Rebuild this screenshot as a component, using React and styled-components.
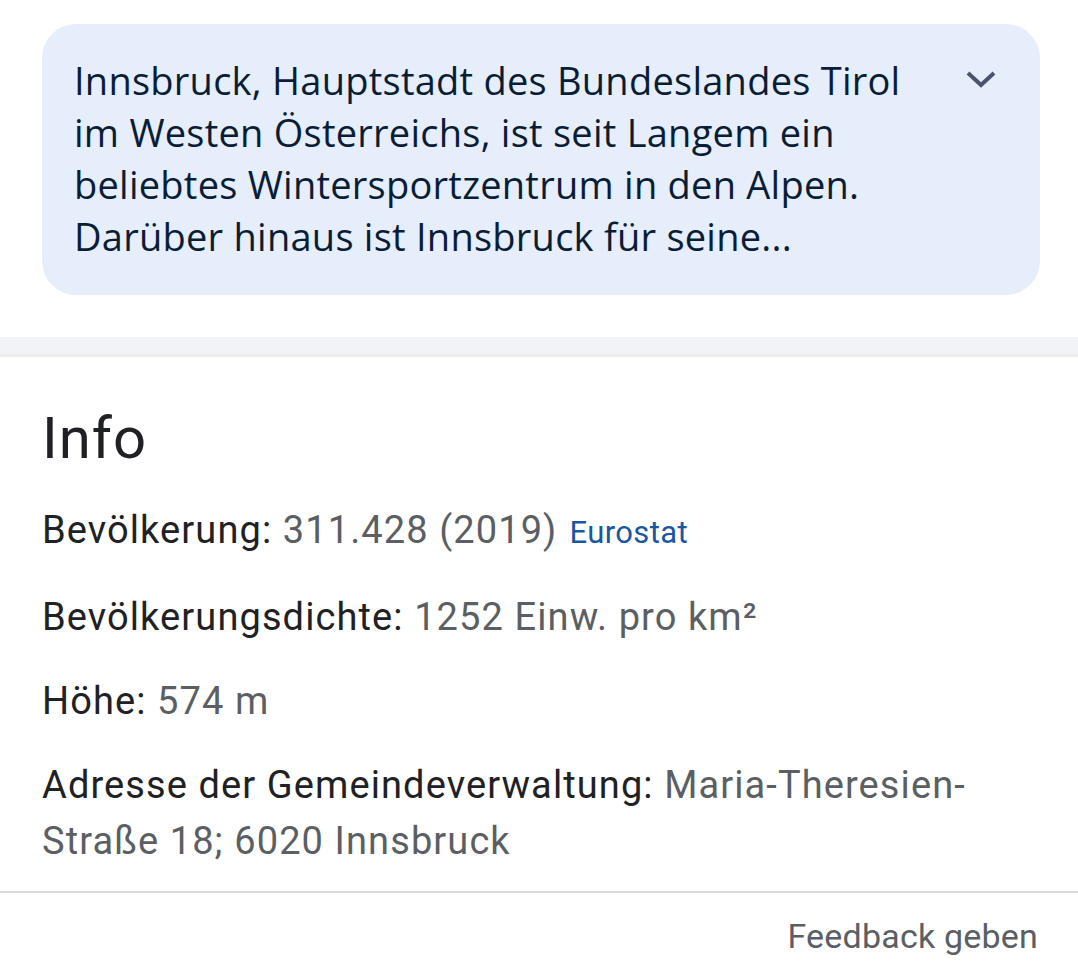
import React from "react";
import styled, { createGlobalStyle } from "styled-components";

const Global = createGlobalStyle`
  html, body { margin: 0; padding: 0; background: #ffffff; }
  body { font-family: Roboto, "Liberation Sans", sans-serif; -webkit-font-smoothing: antialiased; }
`;

const Page = styled.div`
  width: 1078px;
  display: flex;
  flex-direction: column;
`;

const SummaryWrap = styled.section`
  padding: 24px 38px 42px 42px;
`;

const SummaryCard = styled.div`
  background: #e6edfb;
  border-radius: 34px;
  padding: 30px 42px 33px 32px;
  display: flex;
  align-items: flex-start;
  gap: 40px;
`;

const SummaryText = styled.p`
  margin: 0;
  flex: 1;
  font-family: "Open Sans", Inter, sans-serif;
  font-size: 38px;
  line-height: 52px;
  color: #0a1d36;
  letter-spacing: 0.25px;
`;

const ChevronButton = styled.button`
  border: 0;
  background: transparent;
  padding: 0;
  margin-top: 12px;
  width: 34px;
  height: 26px;
  display: flex;
  align-items: center;
  justify-content: center;
  color: #4a5270;
`;

const SectionGap = styled.div`
  height: 17px;
  background: #f1f3f7;
  border-bottom: 3px solid #ececec;
`;

const InfoSection = styled.section`
  padding: 51px 42px 22px 42px;
  display: flex;
  flex-direction: column;
`;

const Heading = styled.h2`
  margin: 0 0 34px 0;
  font-weight: 400;
  font-size: 58px;
  line-height: 60px;
  letter-spacing: 1px;
  color: #202124;
`;

const InfoList = styled.dl`
  margin: 0;
  display: flex;
  flex-direction: column;
  gap: 28px;
`;

const InfoRow = styled.div`
  font-size: 38px;
  line-height: 56px;
  letter-spacing: 1.1px;
  color: #202124;
`;

const Label = styled.dt`
  display: inline;
  color: #202124;
`;

const Value = styled.dd`
  display: inline;
  margin: 0;
  color: #5b5f64;
`;

const Source = styled.a`
  color: #1a57a2;
  font-size: 31px;
  letter-spacing: 0.4px;
  text-decoration: none;
  margin-left: 12px;
`;

const Footer = styled.footer`
  border-top: 2px solid #dadada;
  padding: 20px 40px 0 0;
  display: flex;
  justify-content: flex-end;
`;

const FeedbackLink = styled.a`
  font-size: 34px;
  line-height: 46px;
  letter-spacing: 0.2px;
  color: #5b5f64;
  text-decoration: none;
`;

const Chevron = () => (
  <svg width="32" height="20" viewBox="0 0 32 20" fill="none">
    <path d="M3 4 L16 16 L29 4" stroke="currentColor" strokeWidth="4" strokeLinecap="butt" strokeLinejoin="miter" />
  </svg>
);

const facts = [
  { label: "Bevölkerung", value: "311.428 (2019)", source: "Eurostat" },
  { label: "Bevölkerungsdichte", value: "1252 Einw. pro km²" },
  { label: "Höhe", value: "574 m" },
  { label: "Adresse der Gemeindeverwaltung", value: "Maria-Theresien-Straße 18; 6020 Innsbruck" },
];

export default function App() {
  return (
    <Page>
      <Global />
      <SummaryWrap>
        <SummaryCard>
          <SummaryText>
            Innsbruck, Hauptstadt des Bundeslandes Tirol im Westen Österreichs, ist seit Langem ein
            beliebtes Wintersportzentrum in den Alpen. Darüber hinaus ist Innsbruck für seine...
          </SummaryText>
          <ChevronButton aria-label="Mehr anzeigen">
            <Chevron />
          </ChevronButton>
        </SummaryCard>
      </SummaryWrap>
      <SectionGap />
      <InfoSection>
        <Heading>Info</Heading>
        <InfoList>
          {facts.map((f) => (
            <InfoRow key={f.label}>
              <Label>{f.label}: </Label>
              <Value>
                {f.value}
                {f.source && <Source href="#">{f.source}</Source>}
              </Value>
            </InfoRow>
          ))}
        </InfoList>
      </InfoSection>
      <Footer>
        <FeedbackLink href="#">Feedback geben</FeedbackLink>
      </Footer>
    </Page>
  );
}
